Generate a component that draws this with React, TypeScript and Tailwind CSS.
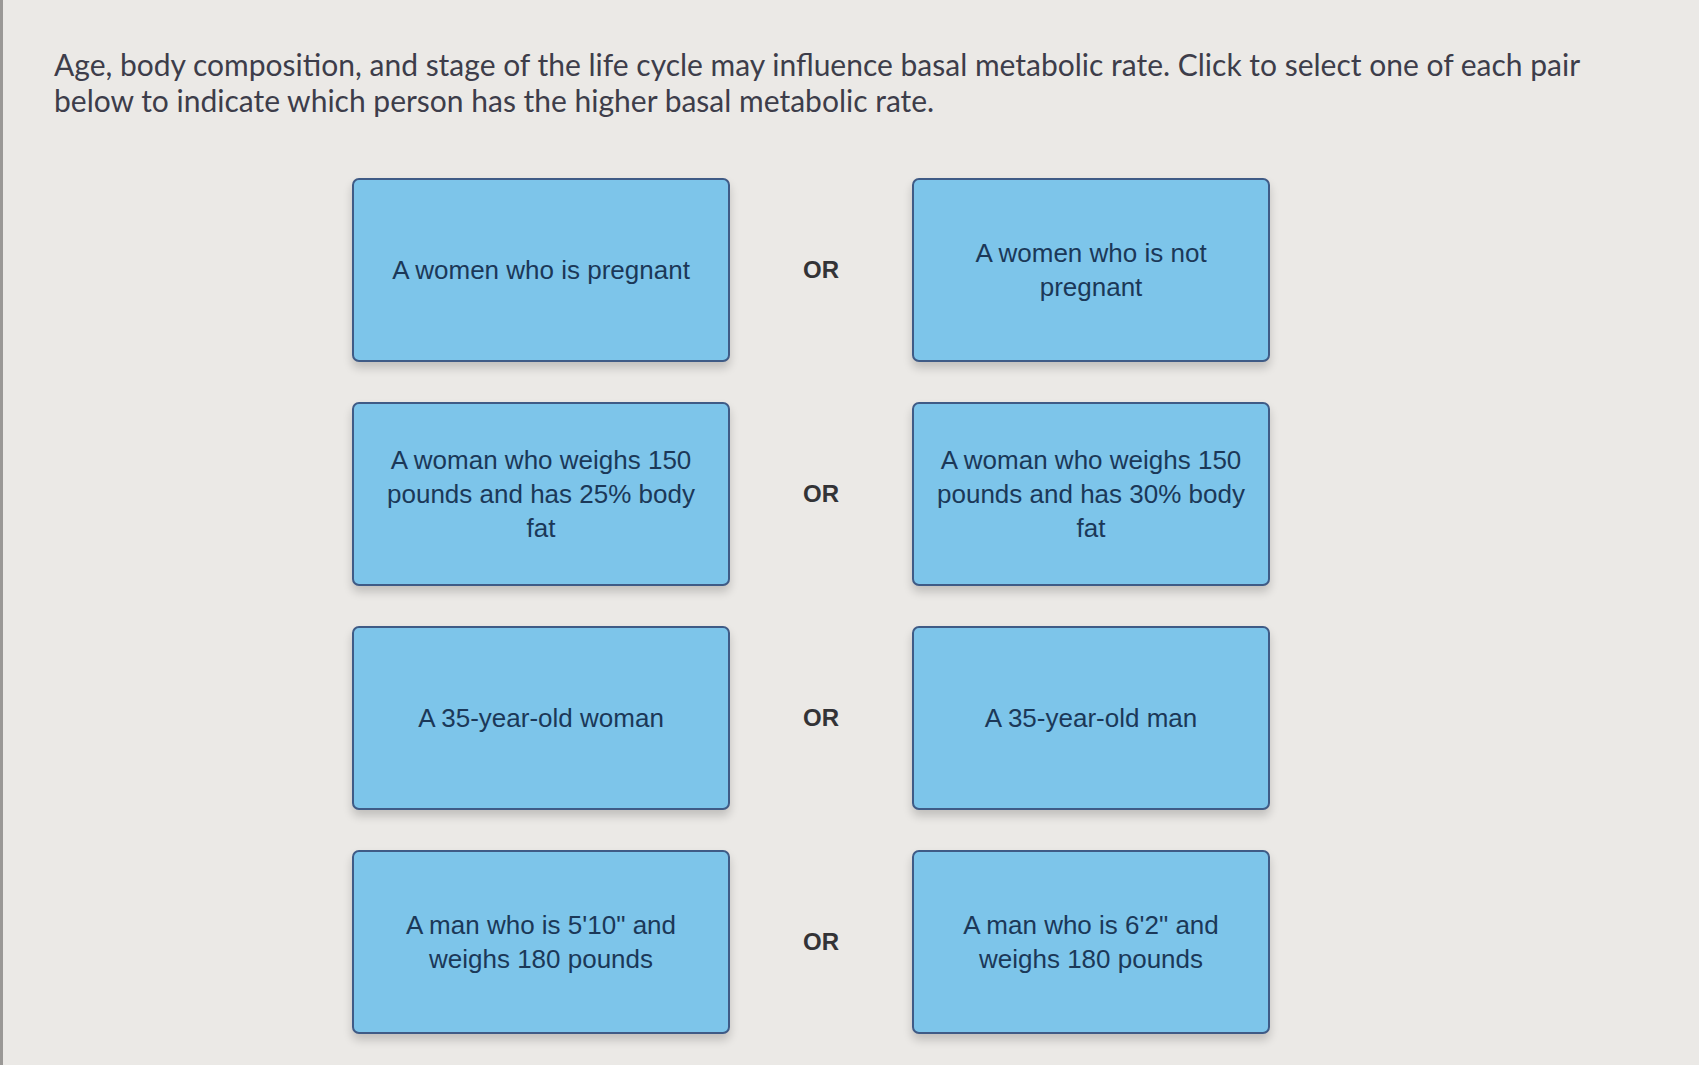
const PAIRS: [string, string][] = [
  ["A women who is pregnant", "A women who is not pregnant"],
  [
    "A woman who weighs 150 pounds and has 25% body fat",
    "A woman who weighs 150 pounds and has 30% body fat",
  ],
  ["A 35-year-old woman", "A 35-year-old man"],
  [
    "A man who is 5'10\" and weighs 180 pounds",
    "A man who is 6'2\" and weighs 180 pounds",
  ],
];

function Card({ label, wide }: { label: string; wide?: boolean }) {
  return (
    <button
      type="button"
      className={`h-[184px] ${
        wide ? "w-[378px] px-6" : "w-[358px] px-5"
      } flex items-center justify-center rounded-[7px] border-2 border-[#3f5b86] bg-[#7dc5ea] text-center text-[26px] leading-[34px] text-[#1b3858] shadow-[0_6px_10px_rgba(0,0,0,0.18)]`}
      style={{ fontFamily: '"Liberation Sans", Arial, sans-serif' }}
    >
      {label}
    </button>
  );
}

export default function App() {
  return (
    <div className="min-h-screen w-full bg-[#ebe9e6] border-l-[3px] border-[#9a9896]">
      {/* Prompt */}
      <p
        className="pl-[51px] pt-[46px] text-[30px] leading-[36px] text-[#3d3d4a]"
        style={{ fontFamily: "Lato, sans-serif" }}
      >
        Age, body composition, and stage of the life cycle may influence basal
        metabolic rate. Click to select one of each pair
        <br />
        below to indicate which person has the higher basal metabolic rate.
      </p>

      {/* Pairs */}
      <div className="mt-[60px] pl-[349px] flex flex-col gap-[40px]">
        {PAIRS.map(([a, b]) => (
          <div key={a} className="flex items-center">
            <Card label={a} wide />
            <span
              className="w-[182px] text-center text-[24px] font-bold text-[#333336]"
              style={{ fontFamily: '"Liberation Sans", Arial, sans-serif' }}
            >
              OR
            </span>
            <Card label={b} />
          </div>
        ))}
      </div>
    </div>
  );
}
